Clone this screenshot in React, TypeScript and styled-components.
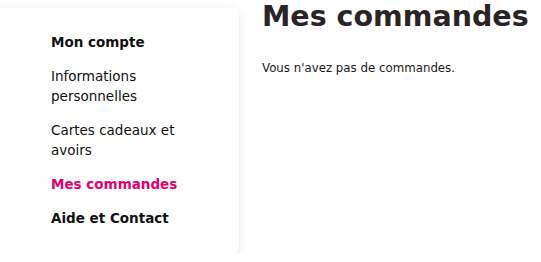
import React from "react";
import styled, { createGlobalStyle } from "styled-components";

const GlobalStyle = createGlobalStyle`
  body {
    margin: 0;
    background: #ffffff;
    font-family: "DejaVu Sans", "Noto Sans", sans-serif;
  }
`;

const menu = [
  { label: "Mon compte", kind: "title" },
  { label: "Informations personnelles", kind: "link" },
  { label: "Cartes cadeaux et avoirs", kind: "link" },
  { label: "Mes commandes", kind: "active" },
  { label: "Aide et Contact", kind: "title" },
] as const;

function App() {
  return (
    <>
      <GlobalStyle />
      <Page>
        <Sidebar>
          <Menu>
            {menu.map((item) => (
              <MenuItem key={item.label} $kind={item.kind}>
                {item.label}
              </MenuItem>
            ))}
          </Menu>
        </Sidebar>
        <Content>
          <Title>Mes commandes</Title>
          <Empty>Vous n'avez pas de commandes.</Empty>
        </Content>
      </Page>
    </>
  );
}

const Page = styled.div`
  display: flex;
  align-items: flex-start;
  gap: 23px;
`;

const Sidebar = styled.aside`
  flex: none;
  margin-left: -10px;
  margin-top: 8px;
  width: 249px;
  height: 245px;
  box-sizing: border-box;
  background: #ffffff;
  border-radius: 6px;
  box-shadow: 0 2px 12px rgba(0, 0, 0, 0.09);
  padding: 24px 40px 0 61px;
`;

const Menu = styled.ul`
  list-style: none;
  margin: 0;
  padding: 0;
  display: flex;
  flex-direction: column;
  gap: 14px;
`;

const MenuItem = styled.li<{ $kind: "title" | "link" | "active" }>`
  font-size: 13.5px;
  line-height: 20px;
  font-weight: ${(p) => (p.$kind === "link" ? 400 : 700)};
  color: ${(p) => (p.$kind === "active" ? "#e5006d" : "#111111")};
`;

const Content = styled.main`
  flex: 1;
  display: flex;
  flex-direction: column;
`;

const Title = styled.h1`
  margin: 0;
  white-space: nowrap;
  font-size: 28.5px;
  line-height: 34px;
  font-weight: 700;
  color: #2a2424;
`;

const Empty = styled.p`
  margin: 26px 0 0;
  font-size: 11.8px;
  line-height: 16px;
  color: #1a1a1a;
`;

export default App;
